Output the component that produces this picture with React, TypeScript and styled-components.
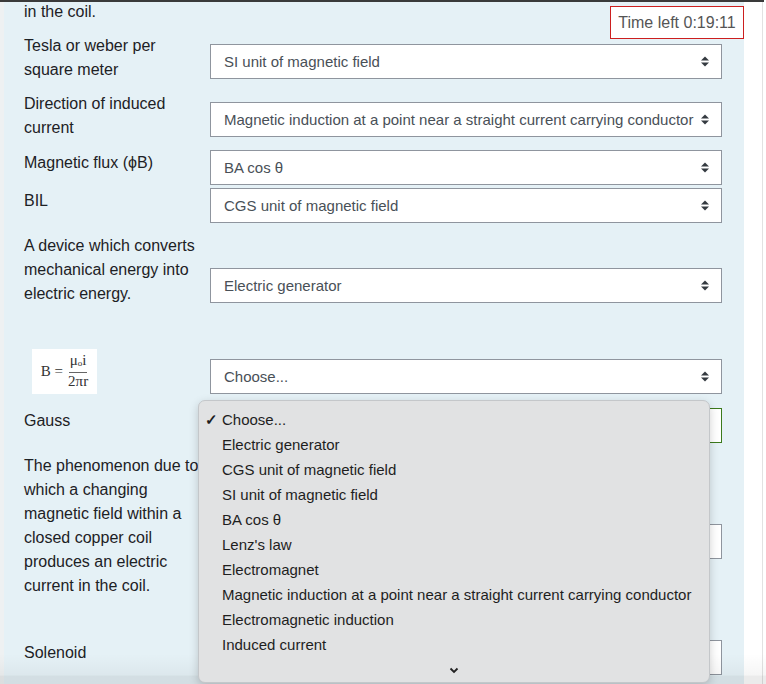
import React from "react";
import styled, { createGlobalStyle } from "styled-components";

const GlobalStyle = createGlobalStyle`
  html, body { margin: 0; padding: 0; background: #fff; overflow: hidden; }
  body { font-family: "Liberation Sans", Arial, sans-serif; }
`;

const Page = styled.div`
  position: relative;
  width: 766px;
  height: 684px;
  overflow: hidden;
  display: flex;
  flex-direction: column;
`;

const TopLine = styled.div`
  flex: none;
  width: 764px;
  height: 2px;
  background: #3a3a3a;
`;

const Body = styled.div`
  flex: 1;
  min-height: 0;
  display: flex;
`;

const LeftEdge = styled.div`
  width: 4px;
  background: #eef1f2;
`;

const Panel = styled.div`
  width: 740px;
  box-sizing: border-box;
  background: #e5f1f6;
  padding: 0 22px 0 20px;
  color: #1d2125;
  font-size: 16px;
`;

const Gutter = styled.div`
  width: 18px;
  background: #fff;
`;

const GutterLine = styled.div`
  width: 1px;
  background: #e2e2e2;
`;

const Stem = styled.div`
  line-height: 20px;
  margin-bottom: 11px;
`;

const Rows = styled.div`
  display: flex;
  flex-direction: column;
`;

const Row = styled.div`
  display: grid;
  grid-template-columns: 178px 512px;
  column-gap: 8px;
  align-items: center;
`;

const Label = styled.div<{ $long?: boolean }>`
  line-height: 24px;
  padding: ${(p) => (p.$long ? "9.5px 0 40.5px" : "1px 0 8.5px")};
`;

const SelectBox = styled.div<{ $ok?: boolean }>`
  box-sizing: border-box;
  height: 35px;
  margin: 1.5px 0;
  border: 1px solid ${(p) => (p.$ok ? "#3c7a1c" : "#8f959e")};
  background: #fff;
  display: flex;
  align-items: center;
  justify-content: space-between;
  padding: 0 12px 0 13px;
  color: #495057;
  white-space: nowrap;
  font-size: 15px;
`;

const FormulaImage = styled.div`
  width: 65px;
  height: 45px;
  margin: 2.5px 0 12.5px 8px;
  background: #fff;
  display: flex;
  align-items: center;
  justify-content: center;
  gap: 5px;
  font-family: "Liberation Serif", "Times New Roman", serif;
  font-size: 15px;
  color: #333;
`;

const Fraction = styled.span`
  display: inline-flex;
  flex-direction: column;
  align-items: center;
  line-height: 13px;
`;

const Numerator = styled.span`
  padding: 0 1px 2px;
  border-bottom: 1px solid #666;
`;

const Denominator = styled.span`
  padding-top: 2px;
`;

const Sub = styled.span`
  font-size: 9px;
  vertical-align: -1px;
`;

const Timer = styled.div`
  position: absolute;
  top: 6px;
  left: 610px;
  width: 134px;
  height: 33px;
  box-sizing: border-box;
  border: 1px solid #cc1f1f;
  background: #fff;
  color: #555;
  font-size: 16px;
  display: flex;
  align-items: center;
  justify-content: center;
`;

const BottomShade = styled.div`
  position: absolute;
  left: 0;
  right: 0;
  bottom: 0;
  height: 30px;
  pointer-events: none;
  background: linear-gradient(
    to bottom,
    rgba(0, 0, 0, 0) 0%,
    rgba(0, 0, 0, 0.04) 70%,
    rgba(0, 0, 0, 0.08) 74%,
    rgba(0, 0, 0, 0.08) 100%
  );
`;

const Dropdown = styled.div`
  position: absolute;
  left: 198px;
  top: 400px;
  width: 512px;
  height: 283px;
  box-sizing: border-box;
  background: #e1e2e3;
  border: 1px solid #c4c7ca;
  border-radius: 7px;
  box-shadow: 0 3px 10px rgba(0, 0, 0, 0.18);
  padding-top: 6px;
  display: flex;
  flex-direction: column;
  color: #1e1e1e;
  font-size: 15px;
`;

const Option = styled.div`
  height: 25px;
  line-height: 25px;
  padding-left: 6px;
  display: flex;
  white-space: nowrap;
`;

const Check = styled.span`
  width: 17px;
  flex: none;
  font-weight: bold;
`;

const ChevronRow = styled.div`
  margin-top: 10px;
  display: flex;
  justify-content: center;
`;

const Arrows = () => (
  <svg width="8" height="11" viewBox="0 0 8 11" aria-hidden="true">
    <path d="M0 4.5 L4 0.5 L8 4.5 Z" fill="#343a40" />
    <path d="M0 6.5 L4 10.5 L8 6.5 Z" fill="#343a40" />
  </svg>
);

const Select = ({ value, ok }: { value: string; ok?: boolean }) => (
  <SelectBox $ok={ok}>
    <span>{value}</span>
    <Arrows />
  </SelectBox>
);

const options = [
  "Choose...",
  "Electric generator",
  "CGS unit of magnetic field",
  "SI unit of magnetic field",
  "BA cos θ",
  "Lenz's law",
  "Electromagnet",
  "Magnetic induction at a point near a straight current carrying conductor",
  "Electromagnetic induction",
  "Induced current",
];

export default function App() {
  return (
    <>
      <GlobalStyle />
      <Page>
        <TopLine />
        <Body>
          <LeftEdge />
          <Panel>
            <Stem>in the coil.</Stem>
            <Rows>
              <Row>
                <Label>Tesla or weber per square meter</Label>
                <Select value="SI unit of magnetic field" />
              </Row>
              <Row>
                <Label>Direction of induced current</Label>
                <Select value="Magnetic induction at a point near a straight current carrying conductor" />
              </Row>
              <Row>
                <Label>Magnetic flux (ϕB)</Label>
                <Select value="BA cos θ" />
              </Row>
              <Row>
                <Label>BIL</Label>
                <Select value="CGS unit of magnetic field" />
              </Row>
              <Row>
                <Label $long>A device which converts mechanical energy into electric energy.</Label>
                <Select value="Electric generator" />
              </Row>
              <Row>
                <FormulaImage>
                  <span>B =</span>
                  <Fraction>
                    <Numerator>
                      μ<Sub>o</Sub>i
                    </Numerator>
                    <Denominator>2πr</Denominator>
                  </Fraction>
                </FormulaImage>
                <Select value="Choose..." />
              </Row>
              <Row>
                <Label>Gauss</Label>
                <Select value="Choose..." ok />
              </Row>
              <Row>
                <Label $long>
                  The phenomenon due to which a changing magnetic field within a closed copper coil produces an electric
                  current in the coil.
                </Label>
                <Select value="Electromagnetic induction" />
              </Row>
              <Row>
                <Label>Solenoid</Label>
                <Select value="Electromagnet" />
              </Row>
            </Rows>
          </Panel>
          <Gutter />
          <GutterLine />
        </Body>
        <Timer>Time left 0:19:11</Timer>
        <BottomShade />
        <Dropdown>
          {options.map((o, i) => (
            <Option key={o}>
              <Check>{i === 0 ? "✓" : ""}</Check>
              <span>{o}</span>
            </Option>
          ))}
          <ChevronRow>
            <svg width="10" height="7" viewBox="0 0 10 7" aria-hidden="true">
              <polyline points="1.5,1.5 5,5 8.5,1.5" fill="none" stroke="#222" strokeWidth="1.8" />
            </svg>
          </ChevronRow>
        </Dropdown>
      </Page>
    </>
  );
}
